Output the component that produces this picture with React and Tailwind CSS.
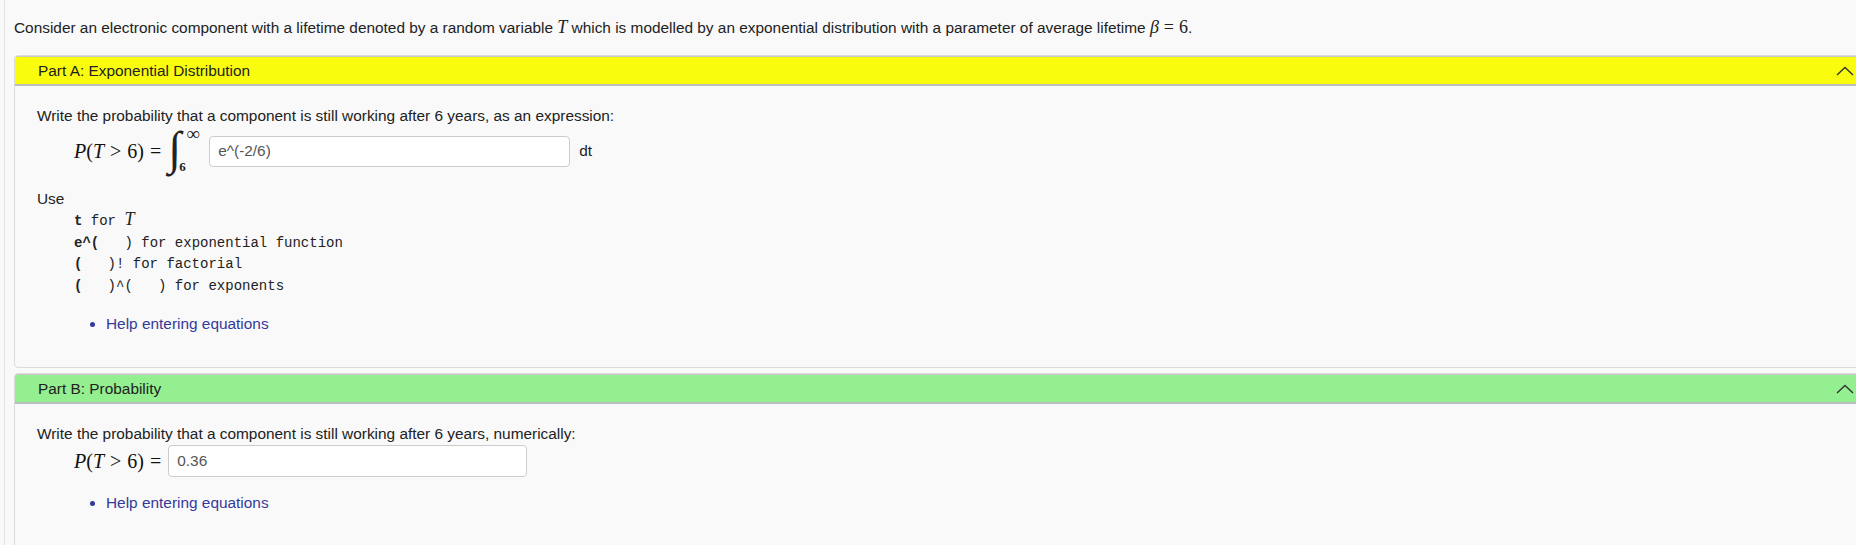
import React from 'react';

const serif = "font-['Liberation_Serif','DejaVu_Serif',serif]";

function Chevron() {
  return (
    <svg width="18" height="10" viewBox="0 0 18 10" className="shrink-0">
      <polyline points="1,9 9,1.5 17,9" fill="none" stroke="#333" strokeWidth="1.4" />
    </svg>
  );
}

function Prob() {
  return (
    <span className={`${serif} text-[20px] text-[#111] whitespace-nowrap`}>
      <i>P</i>(<i>T</i>
      <span className="mx-[6px]">&gt;</span>6)
      <span className="ml-[6px]">=</span>
    </span>
  );
}

function HelpLink() {
  return (
    <ul className="list-disc pl-[69px] text-[#35399a]">
      <li className="leading-5">Help entering equations</li>
    </ul>
  );
}

function Panel({ title, color, children }) {
  return (
    <section className="w-[1862px] border border-[#dcdcdc] rounded-[4px] overflow-hidden">
      <div className={`flex items-center justify-between h-[30px] border-t border-t-[#c8c8c8] border-b-2 border-b-[#bdbdbd] pl-[23px] pr-[21px] ${color}`}>
        <span className="text-[#222] leading-5">{title}</span>
        <Chevron />
      </div>
      {children}
    </section>
  );
}

export default function App() {
  return (
    <div className="h-[545px] overflow-hidden bg-[#f9f9f9] pl-1 text-[15.4px] text-[#222] font-['Liberation_Sans',Arial,sans-serif]">
      <div className="h-full border-l border-[#e2e2e2] pl-[9px]">
        <p className="pt-[17px] leading-5 whitespace-nowrap">
          Consider an electronic component with a lifetime denoted by a random variable{' '}
          <i className={`${serif} text-[18px]`}>T</i> which is modelled by an exponential distribution with a parameter of average lifetime{' '}
          <span className={`${serif} text-[18px]`}>
            <i>β</i>
            <span className="mx-[5px]">=</span>6
          </span>
          .
        </p>

        <div className="mt-[17px] flex flex-col gap-[5px]">
          <Panel title="Part A: Exponential Distribution" color="bg-[#fafc0e]">
            <div className="pl-[22px] pt-5 pb-[33px]">
              <p className="leading-5">Write the probability that a component is still working after 6 years, as an expression:</p>
              <div className="mt-[3px] flex items-center h-[44px] pl-[37px]">
                <Prob />
                <span className="relative inline-block w-[48px] h-[44px]">
                  <span className={`absolute left-[7px] top-[-4px] ${serif} text-[47px] leading-none italic`}>∫</span>
                  <span className={`absolute left-[25px] top-[-5px] ${serif} text-[19px] leading-none`}>∞</span>
                  <span className={`absolute left-[18px] top-[31px] ${serif} text-[13px] font-bold leading-none`}>6</span>
                </span>
                <div className="w-[361px] h-[31px] bg-white border border-[#cccccc] rounded-[4px] flex items-center px-[8px] text-[#555]">
                  e^(-2/6)
                </div>
                <span className="ml-[9px]">dt</span>
              </div>
              <p className="mt-4 leading-5">Use</p>
              <div className="pl-[37px] font-['Liberation_Mono','DejaVu_Sans_Mono',monospace] text-[14px] leading-[21.5px] whitespace-pre">
                <div>
                  <b>t</b> for <i className={`${serif} text-[18px]`}>T</i>
                </div>
                <div>
                  <b>e^(</b>   ) for exponential function
                </div>
                <div>
                  <b>(</b>   )! for factorial
                </div>
                <div>
                  <b>(</b>   )^(   ) for exponents
                </div>
              </div>
              <div className="mt-[17px]">
                <HelpLink />
              </div>
            </div>
          </Panel>

          <Panel title="Part B: Probability" color="bg-[#93ef90]">
            <div className="pl-[22px] pt-5 pb-10">
              <p className="leading-5">Write the probability that a component is still working after 6 years, numerically:</p>
              <div className="mt-[1px] flex items-center pl-[37px]">
                <Prob />
                <div className="ml-[7px] w-[359px] h-[32px] bg-white border border-[#cccccc] rounded-[4px] flex items-center px-[8px] text-[#555]">
                  0.36
                </div>
              </div>
              <div className="mt-4">
                <HelpLink />
              </div>
            </div>
          </Panel>
        </div>
      </div>
    </div>
  );
}
